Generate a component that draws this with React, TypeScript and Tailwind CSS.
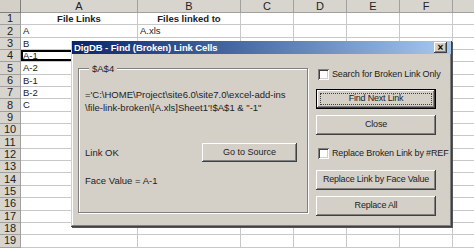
import React from "react";

const COLS = ["A", "B", "C", "D", "E", "F", "G"];

const CELLS: Record<string, { text: string; bold?: boolean; center?: boolean }> = {
  A1: { text: "File Links", bold: true, center: true },
  B1: { text: "Files linked to", bold: true, center: true },
  A2: { text: "A" },
  B2: { text: "A.xls" },
  A3: { text: "B" },
  A4: { text: "A-1" },
  A5: { text: "A-2" },
  A6: { text: "B-1" },
  A7: { text: "B-2" },
  A8: { text: "C" },
};

const raised =
  "bg-[#d4d0c8] shadow-[inset_-1px_-1px_#404040,inset_1px_1px_#ffffff,inset_-2px_-2px_#808080,inset_2px_2px_#d4d0c8]";

function Button({ children, isDefault }: { children: React.ReactNode; isDefault?: boolean }) {
  if (isDefault) {
    return (
      <div className="h-[20px] w-full border border-black">
        <div className={`${raised} h-full w-full p-[3px]`}>
          <div className="flex h-full items-center justify-center whitespace-nowrap border border-dotted border-[#404040] text-[9px] tracking-[-0.2px] text-[#222]">
            {children}
          </div>
        </div>
      </div>
    );
  }
  return (
    <div
      className={`${raised} flex h-[20px] w-full items-center justify-center whitespace-nowrap text-[9px] tracking-[-0.2px] text-[#222]`}
    >
      {children}
    </div>
  );
}

function Checkbox({ label }: { label: string }) {
  return (
    <div className="flex h-[11px] items-center gap-[3px]">
      <div className="h-[11px] w-[11px] shrink-0 bg-white shadow-[inset_1px_1px_#808080,inset_-1px_-1px_#ffffff,inset_2px_2px_#404040,inset_-2px_-2px_#d4d0c8]" />
      <span className="whitespace-nowrap text-[9px] tracking-[-0.15px] text-[#222]">{label}</span>
    </div>
  );
}

function Dialog() {
  return (
    <div className="absolute left-[71px] top-[41px] flex h-[186px] w-[381px] flex-col bg-[#d4d0c8] shadow-[inset_-1px_-1px_#404040,inset_1px_1px_#d4d0c8,inset_-2px_-2px_#808080,inset_2px_2px_#ffffff,1px_1px_0_#555]">
      {/* title bar */}
      <div className="mx-[1px] flex h-[13px] items-center justify-between bg-gradient-to-r from-[#0a246a] to-[#a6caf0] pl-[2px] pr-[4px]">
        <span className="text-[9.5px] font-bold leading-none tracking-[-0.1px] text-white">DigDB - Find (Broken) Link Cells</span>
        <div className={`${raised} flex h-[11px] w-[13px] items-center justify-center text-[10px] font-bold leading-none text-black`}>
          ×
        </div>
      </div>

      <div className="flex flex-1 gap-[8px] pl-[7px] pt-[14px]">
        {/* group box */}
        <div className="relative h-[145px] w-[230px] border border-[#808080] shadow-[1px_1px_0_#ffffff,inset_1px_1px_0_#ffffff]">
          <span className="absolute left-[10px] top-[-6px] bg-[#d4d0c8] px-[3px] text-[9.5px] leading-[11px] text-[#222]">
            $A$4
          </span>
          <div className="flex h-full flex-col pl-[6px] pr-[10px] pt-[19px] text-[9.5px] leading-[13px] text-[#222]">
            <p className="whitespace-nowrap">=&apos;C:\HOME\Project\site6.0\site7.0\excel-add-ins</p>
            <p className="whitespace-nowrap">\file-link-broken\[A.xls]Sheet1&apos;!$A$1 &amp; &quot;-1&quot;</p>
            <div className="mt-[29px] flex items-center justify-between">
              <span>Link OK</span>
              <div className={`${raised} flex h-[19px] w-[95px] items-center justify-center text-[9px]`}>Go to Source</div>
            </div>
            <p className="mt-[12px]">Face Value = A-1</p>
          </div>
        </div>

        {/* right column */}
        <div className="flex w-[120px] flex-col pt-[1px]">
          <div className="pl-[2px]">
            <Checkbox label="Search for Broken Link Only" />
          </div>
          <div className="mt-[9px]">
            <Button isDefault>Find Next Link</Button>
          </div>
          <div className="mt-[6px]">
            <Button>Close</Button>
          </div>
          <div className="mt-[13px] pl-[2px]">
            <Checkbox label="Replace Broken Link by #REF" />
          </div>
          <div className="mt-[11px]">
            <Button>Replace Link by Face Value</Button>
          </div>
          <div className="mt-[6px]">
            <Button>Replace All</Button>
          </div>
        </div>
      </div>
    </div>
  );
}

export default function App() {
  const rows = Array.from({ length: 19 }, (_, i) => i + 1);

  return (
    <div className="relative h-[248px] w-[474px] overflow-hidden bg-white font-['Liberation_Sans',Arial,sans-serif]">
      <div className="grid w-[510px] grid-cols-[21px_117px_103px_53px_53px_53px_53px_57px] grid-rows-[13px_repeat(19,12.35px)]">
        <div className="border-b border-r border-[#808080] bg-[#d4d0c8]" />
        {COLS.map((c) => (
          <div
            key={c}
            className="flex items-center justify-center border-b border-r border-[#a0a0a0] bg-[#d8d5ce] text-[11px] leading-none text-[#222]"
          >
            {c === "G" ? "" : c}
          </div>
        ))}
        {rows.map((r) => (
          <React.Fragment key={r}>
            <div className="flex items-center justify-center border-b border-r border-[#a0a0a0] bg-[#d8d5ce] text-[11px] leading-none text-[#222]">
              {r}
            </div>
            {COLS.map((c) => {
              const cell = CELLS[`${c}${r}`];
              const selected = c === "A" && r === 4;
              return (
                <div
                  key={c}
                  className={`flex items-center overflow-hidden whitespace-nowrap border-b border-r border-[#c8c8c8] px-[2px] text-[9.5px] leading-none text-[#222] ${
                    cell?.center ? "justify-center" : ""
                  } ${cell?.bold ? "font-bold" : ""} ${selected ? "shadow-[inset_0_0_0_2px_#000]" : ""}`}
                >
                  {cell?.text}
                </div>
              );
            })}
          </React.Fragment>
        ))}
      </div>
      <Dialog />
    </div>
  );
}
